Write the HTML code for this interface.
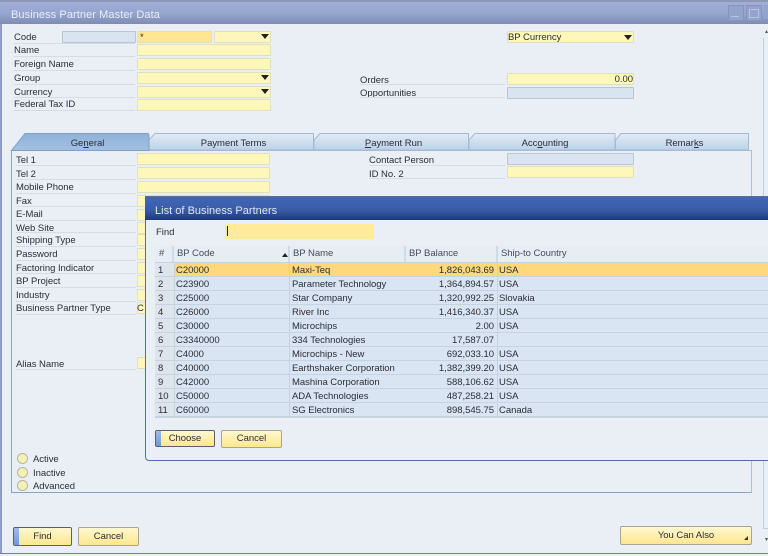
<!DOCTYPE html>
<html><head><meta charset="utf-8"><style>
html,body{margin:0;padding:0}
#p{position:relative;width:768px;height:556px;overflow:hidden;background:#e9eff5;font:9.5px/12px "Liberation Sans",sans-serif;letter-spacing:-.03px;color:#2a2e36;filter:blur(.35px)}
#p div,#p svg{position:absolute}
.l{white-space:nowrap;height:12px;margin-top:1px}
.u{height:1px;background:#d3dce7}
.f{background:#fdf8b9;border-radius:1px;box-shadow:0 0 0 1px #dfe0c0 inset;height:12px;line-height:14px}
.g{background:#d9e4f1;border-radius:1px;box-shadow:0 0 0 1px #bcc6d2 inset;height:12px}
.a{width:0;height:0;border-left:4px solid transparent;border-right:4px solid transparent;border-top:5px solid #222}
.b{height:17px;border:1px solid #a8a490;border-radius:2px;background:linear-gradient(#fff8d0,#fee78e);text-align:center;line-height:17px;box-sizing:content-box}
.b.d{border:1.5px solid #5b5f68}
.b.d i{position:absolute;left:0;top:0;bottom:0;width:5px;background:linear-gradient(#9dbce6,#6f9ad6)}
.r{width:9px;height:9px;border-radius:50%;background:#f4f1b8;border:1px solid #b4b69f}
.c{position:absolute;height:13px;line-height:15px;white-space:nowrap;top:0;overflow:hidden}
.w{position:absolute;left:155px;width:613px;height:14px}
.n{left:0;width:16px;padding-left:3px;background:#dde4ec;text-align:left;height:13px;border-right:1px solid #c8d3e0}
.k{left:20px;width:113px;padding-left:1px;background:#d9e5f3;border-right:1px solid #c7d2df}
.m{left:135px;width:114px;padding-left:2px;background:#d9e5f3;border-right:1px solid #c7d2df}
.v{left:251px;width:88px;padding-right:3px;text-align:right;background:#d9e5f3;border-right:1px solid #c7d2df}
.t{left:343px;width:272px;padding-left:1px;background:#d9e5f3}
.s .c{background:#fdd97c}
.h{position:absolute;top:0;height:16px;line-height:16px;color:#444c58;background:#e6edf5;border-right:2px solid #d0dbe8;box-sizing:border-box;padding-left:3px;white-space:nowrap}
.tb{text-align:center;height:13px;line-height:13px;top:137px;white-space:nowrap}
</style></head><body><div id="p">
<div style="left:0;top:0;width:768px;height:2px;background:#8e97b5"></div>
<div style="left:0;top:2px;width:768px;height:22px;background:linear-gradient(#9fafd8,#94a4cd 55%,#7d8cb3)"></div>
<div class="l" style="left:11px;top:8px;font-size:11px;letter-spacing:.08px;color:#e8edf7">Business Partner Master Data</div>
<div style="left:728px;top:5px;width:14px;height:14px;border:1px solid #8795bb;background:#94a3cb"></div>
<div style="left:731px;top:16px;width:8px;height:1px;background:#b8c4df"></div>
<div style="left:746px;top:5px;width:14px;height:14px;border:1px solid #8795bb;background:#94a3cb"></div>
<div style="left:749px;top:9px;width:8px;height:7px;border:1px solid #b8c4df"></div>
<div style="left:764px;top:5px;width:4px;height:14px;background:#94a3cb"></div>
<div style="left:0;top:24px;width:2px;height:530px;background:#8d9cc0"></div>
<div style="left:0;top:553px;width:768px;height:1px;background:#6f80a8"></div>
<div style="left:763px;top:38px;width:1px;height:490px;background:#c1cedd"></div>
<div style="left:763px;top:528px;width:5px;height:1px;background:#c1cedd"></div>
<svg style="left:765px;top:30px" width="3" height="3"><path d="M1.500 0L3 3H0Z" fill="#555"/></svg>
<svg style="left:765px;top:538px" width="3" height="3"><path d="M1.500 3L3 0H0Z" fill="#555"/></svg>

<!-- header fields -->
<div class="l" style="left:14px;top:31px">Code</div><div class="u" style="left:14px;top:43px;width:121px"></div>
<div class="l" style="left:14px;top:44px">Name</div><div class="u" style="left:14px;top:56px;width:121px"></div>
<div class="l" style="left:14px;top:58px">Foreign Name</div><div class="u" style="left:14px;top:70px;width:121px"></div>
<div class="l" style="left:14px;top:72px">Group</div><div class="u" style="left:14px;top:84px;width:121px"></div>
<div class="l" style="left:14px;top:86px">Currency</div><div class="u" style="left:14px;top:97px;width:121px"></div>
<div class="l" style="left:14px;top:98px">Federal Tax ID</div><div class="u" style="left:14px;top:110px;width:121px"></div>
<div class="g" style="left:62px;top:31px;width:74px"></div>
<div class="f" style="left:137px;top:31px;width:75px;background:#ffe690;padding-left:3px;box-sizing:border-box">*</div>
<div class="f" style="left:214px;top:31px;width:57px"></div><div class="a" style="left:261px;top:34px"></div>
<div class="f" style="left:137px;top:44px;width:134px"></div>
<div class="f" style="left:137px;top:58px;width:134px"></div>
<div class="f" style="left:137px;top:72px;width:134px"></div><div class="a" style="left:261px;top:75px"></div>
<div class="f" style="left:137px;top:86px;width:134px"></div><div class="a" style="left:261px;top:89px"></div>
<div class="f" style="left:137px;top:99px;width:134px"></div>
<div class="f" style="left:507px;top:31px;width:127px;padding-left:1px;box-sizing:border-box">BP Currency</div><div class="a" style="left:624px;top:35px"></div>
<div class="l" style="left:360px;top:74px">Orders</div><div class="u" style="left:360px;top:84px;width:145px"></div>
<div class="l" style="left:360px;top:87px">Opportunities</div><div class="u" style="left:360px;top:97px;width:145px"></div>
<div class="f" style="left:507px;top:73px;width:127px;text-align:right;box-sizing:border-box;padding-right:1px">0.00</div>
<div class="g" style="left:507px;top:87px;width:127px"></div>

<!-- tabs -->
<div style="left:11px;top:150px;width:741px;height:343px;border:1px solid #a9bfd8;box-sizing:border-box;border-color:#a9bfd8 #aac0d9 #8ba3c4 #8ba3c4"></div>
<svg style="left:0;top:130px" width="768" height="22">
<defs><linearGradient id="x" x1="0" y1="0" x2="0" y2="1"><stop offset="0" stop-color="#e2ebf4"/><stop offset="1" stop-color="#bcd2e8"/></linearGradient>
<linearGradient id="y" x1="0" y1="0" x2="0" y2="1"><stop offset="0" stop-color="#8fb2da"/><stop offset="1" stop-color="#a3c0e1"/></linearGradient></defs>
<g fill="url(#x)" stroke="#a3bad4"><path d="M149 20 V10 L155 3.500 H313.500 V20Z"/><path d="M314 20 V10 L320 3.500 H468.500 V20Z"/><path d="M469 20 V10 L475 3.500 H615 V20Z"/><path d="M615.500 20 V10 L621 3.500 H748.500 V20Z"/></g>
<path d="M11.500 20.500 L25 3.500 H148 L149 5 V20.500Z" fill="url(#y)" stroke="#7f9fc6"/>
</svg>
<div class="tb" style="left:20px;width:135px"><span>Ge<u>n</u>eral</span></div>
<div class="tb" style="left:150px;width:167px">Payment Terms</div>
<div class="tb" style="left:316px;width:155px"><u>P</u>ayment Run</div>
<div class="tb" style="left:472px;width:146px">Acc<u>o</u>unting</div>
<div class="tb" style="left:617px;width:135px">Remar<u>k</u>s</div>

<!-- general tab -->
<div class="l" style="left:16px;top:154px">Tel 1</div><div class="u" style="left:16px;top:165px;width:120px"></div>
<div class="l" style="left:16px;top:168px">Tel 2</div><div class="u" style="left:16px;top:179px;width:120px"></div>
<div class="l" style="left:16px;top:181px">Mobile Phone</div><div class="u" style="left:16px;top:193px;width:120px"></div>
<div class="l" style="left:16px;top:195px">Fax</div><div class="u" style="left:16px;top:206px;width:120px"></div>
<div class="l" style="left:16px;top:208px">E-Mail</div><div class="u" style="left:16px;top:220px;width:120px"></div>
<div class="l" style="left:16px;top:222px">Web Site</div><div class="u" style="left:16px;top:232px;width:120px"></div>
<div class="l" style="left:16px;top:234px">Shipping Type</div><div class="u" style="left:16px;top:246px;width:120px"></div>
<div class="l" style="left:16px;top:248px">Password</div><div class="u" style="left:16px;top:260px;width:120px"></div>
<div class="l" style="left:16px;top:262px">Factoring Indicator</div><div class="u" style="left:16px;top:273px;width:120px"></div>
<div class="l" style="left:16px;top:275px">BP Project</div><div class="u" style="left:16px;top:287px;width:120px"></div>
<div class="l" style="left:16px;top:289px">Industry</div><div class="u" style="left:16px;top:301px;width:120px"></div>
<div class="l" style="left:16px;top:302px">Business Partner Type</div><div class="u" style="left:16px;top:314px;width:120px"></div>
<div class="l" style="left:16px;top:358px">Alias Name</div><div class="u" style="left:16px;top:369px;width:120px"></div>
<div class="f" style="left:137px;top:153px;width:133px"></div>
<div class="f" style="left:137px;top:167px;width:133px"></div>
<div class="f" style="left:137px;top:181px;width:133px"></div>
<div class="f" style="left:137px;top:195px;width:133px"></div>
<div class="f" style="left:137px;top:209px;width:20px"></div>
<div class="f" style="left:137px;top:222px;width:20px"></div>
<div class="f" style="left:137px;top:234px;width:20px"></div>
<div class="f" style="left:137px;top:248px;width:20px"></div>
<div class="f" style="left:137px;top:262px;width:20px"></div>
<div class="f" style="left:137px;top:275px;width:20px"></div>
<div class="f" style="left:137px;top:289px;width:20px"></div>
<div class="f" style="left:137px;top:302px;width:20px">C</div>
<div class="f" style="left:137px;top:357px;width:20px"></div>
<div class="l" style="left:369px;top:154px">Contact Person</div><div class="u" style="left:369px;top:165px;width:136px"></div>
<div class="l" style="left:369px;top:168px">ID No. 2</div><div class="u" style="left:369px;top:178px;width:136px"></div>
<div class="g" style="left:507px;top:153px;width:127px"></div>
<div class="f" style="left:507px;top:166px;width:127px"></div>

<div class="r" style="left:17px;top:453px"></div><div class="l" style="left:33px;top:453px">Active</div>
<div class="r" style="left:17px;top:467px"></div><div class="l" style="left:33px;top:467px">Inactive</div>
<div class="r" style="left:17px;top:480px"></div><div class="l" style="left:33px;top:480px">Advanced</div>

<div class="b d" style="left:13px;top:527px;width:57px"><i></i>Find</div>
<div class="b" style="left:78px;top:527px;width:59px">Cancel</div>
<div class="b" style="left:620px;top:526px;width:130px;line-height:18px">You Can Also</div>
<svg style="left:744px;top:536px" width="5" height="5"><path d="M4 0V4H0Z" fill="#333"/></svg>

<!-- modal -->
<div style="left:145px;top:196px;width:640px;height:265px;background:#e9eff5;border:1px solid #4f6fa6;border-radius:0 0 0 4px;box-sizing:border-box"></div>
<div style="left:145px;top:196px;width:623px;height:24px;background:linear-gradient(#4367b6,#3a5ca8 55%,#1c3a7a);border-top:1px solid #5a6d96;box-sizing:border-box"></div>
<div class="l" style="left:155px;top:204px;font-size:11px;letter-spacing:.02px;color:#dfe7f5">List of Business Partners</div>
<div class="l" style="left:156px;top:226px">Find</div>
<div style="left:225px;top:224px;width:149px;height:15px;background:#ffeb99;border-radius:1px"></div>
<div style="left:227px;top:226px;width:1px;height:10px;background:#222"></div>

<div style="left:155px;top:246px;width:613px;height:172px;background:#c7d3e0"></div>
<div style="left:155px;top:246px;width:613px;height:17px">
<div class="h" style="left:0;width:19px;padding-left:4px">#</div>
<div class="h" style="left:19px;width:116px">BP Code</div>
<div class="a" style="left:127px;top:7px;border-top:0;border-bottom:4px solid #222;border-left-width:3px;border-right-width:3px"></div>
<div class="h" style="left:135px;width:116px">BP Name</div>
<div class="h" style="left:251px;width:92px">BP Balance</div>
<div class="h" style="left:343px;width:270px;border-right:0">Ship-to Country</div>
</div>

<div class="w s" style="top:263px"><div class="c n" style="background:#dde4ec">1</div><div class="c k">C20000</div><div class="c m">Maxi-Teq</div><div class="c v">1,826,043.69</div><div class="c t">USA</div></div>
<div class="w" style="top:277px"><div class="c n">2</div><div class="c k">C23900</div><div class="c m">Parameter Technology</div><div class="c v">1,364,894.57</div><div class="c t">USA</div></div>
<div class="w" style="top:291px"><div class="c n">3</div><div class="c k">C25000</div><div class="c m">Star Company</div><div class="c v">1,320,992.25</div><div class="c t">Slovakia</div></div>
<div class="w" style="top:305px"><div class="c n">4</div><div class="c k">C26000</div><div class="c m">River Inc</div><div class="c v">1,416,340.37</div><div class="c t">USA</div></div>
<div class="w" style="top:319px"><div class="c n">5</div><div class="c k">C30000</div><div class="c m">Microchips</div><div class="c v">2.00</div><div class="c t">USA</div></div>
<div class="w" style="top:333px"><div class="c n">6</div><div class="c k">C3340000</div><div class="c m">334 Technologies</div><div class="c v">17,587.07</div><div class="c t"></div></div>
<div class="w" style="top:347px"><div class="c n">7</div><div class="c k">C4000</div><div class="c m">Microchips - New</div><div class="c v">692,033.10</div><div class="c t">USA</div></div>
<div class="w" style="top:361px"><div class="c n">8</div><div class="c k">C40000</div><div class="c m">Earthshaker Corporation</div><div class="c v">1,382,399.20</div><div class="c t">USA</div></div>
<div class="w" style="top:375px"><div class="c n">9</div><div class="c k">C42000</div><div class="c m">Mashina Corporation</div><div class="c v">588,106.62</div><div class="c t">USA</div></div>
<div class="w" style="top:389px"><div class="c n">10</div><div class="c k">C50000</div><div class="c m">ADA Technologies</div><div class="c v">487,258.21</div><div class="c t">USA</div></div>
<div class="w" style="top:403px"><div class="c n">11</div><div class="c k">C60000</div><div class="c m">SG Electronics</div><div class="c v">898,545.75</div><div class="c t">Canada</div></div>

<div class="b d" style="left:155px;top:430px;width:58px;height:15px;line-height:15px"><i></i>Choose</div>
<div class="b" style="left:221px;top:430px;width:59px;height:16px;line-height:16px">Cancel</div>
</div></body></html>
